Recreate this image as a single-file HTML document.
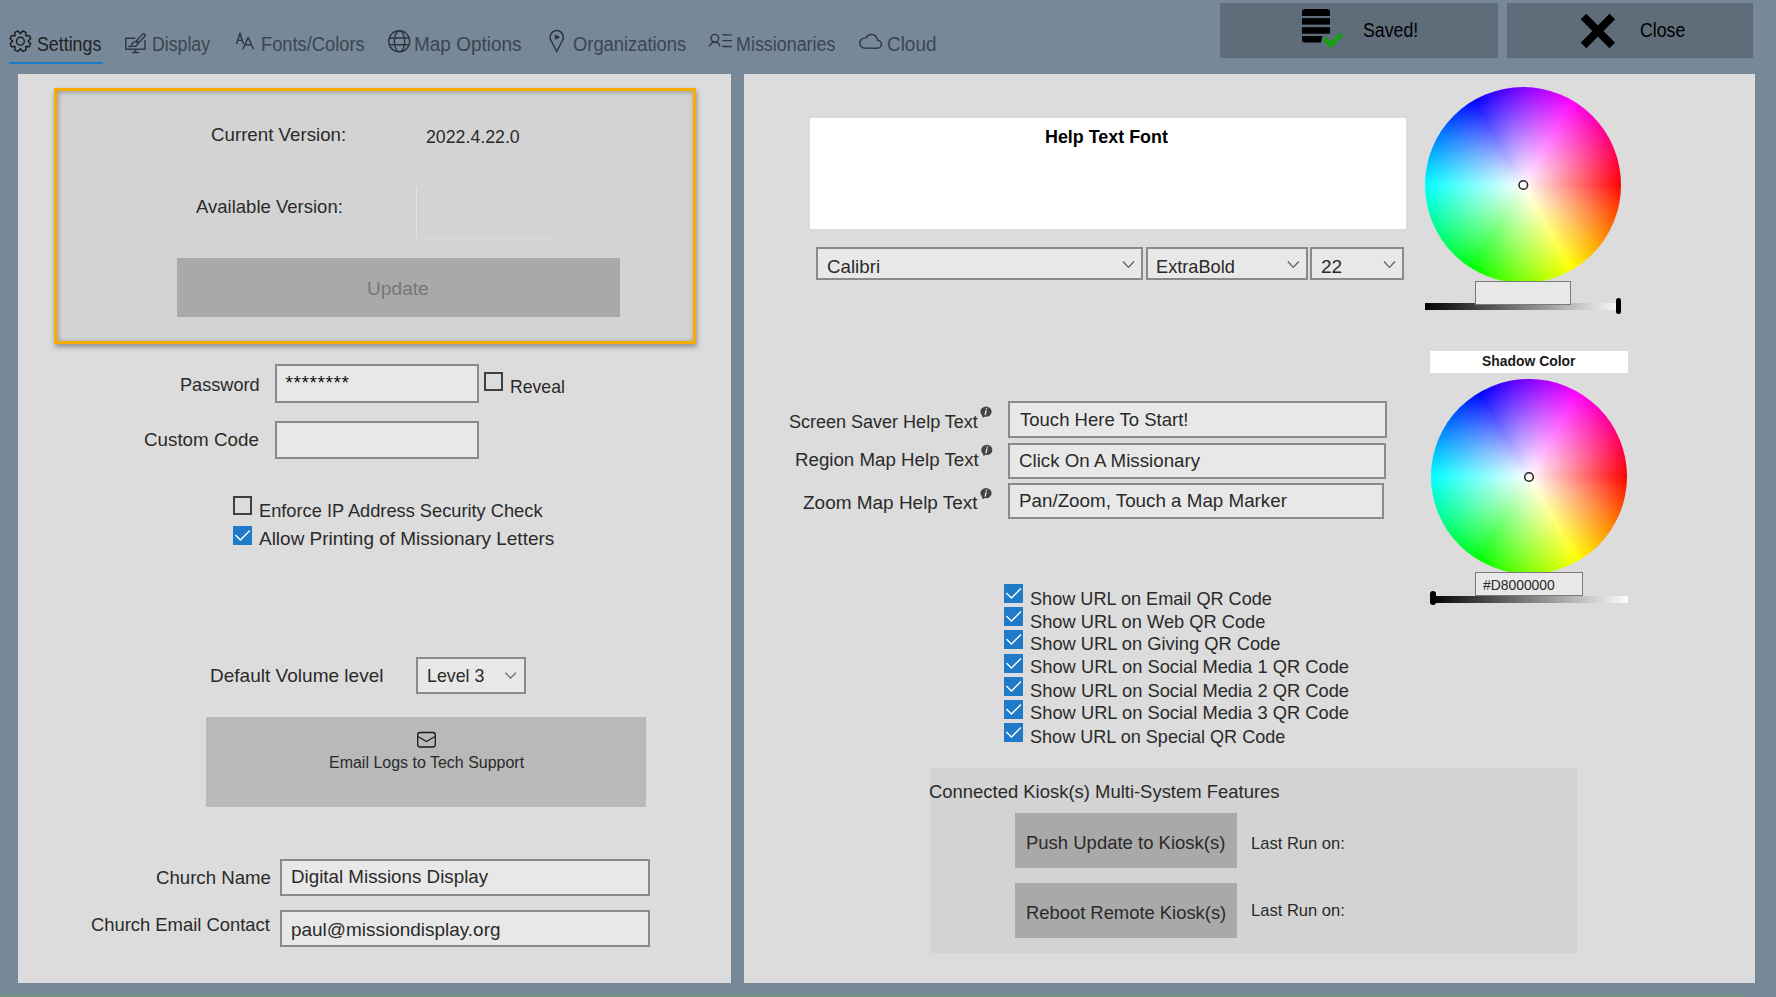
<!DOCTYPE html>
<html><head><meta charset="utf-8"><title>Settings</title>
<style>
html,body{margin:0;padding:0;}
body{width:1776px;height:997px;overflow:hidden;position:relative;background:#778899;font-family:"Liberation Sans",sans-serif;color:#2a2a2a;}
.a{position:absolute;box-sizing:border-box;}
.t{position:absolute;white-space:pre;}
.panel{background:#dcdcdc;}
.tb{background:#e8e8e8;border:2px solid #8a8a8a;}
.btn{background:#a9a9a9;}
.topbtn{background:#5f6d7a;}
.cb{width:19px;height:19px;border:2px solid #404040;}
.cbc{width:19px;height:19px;background:#1f7ac8;}
.wheel{border-radius:50%;background:radial-gradient(circle closest-side,#fff 0%,rgba(255,255,255,0) 100%),conic-gradient(from 90deg,#f00,#ff0,#0f0,#0ff,#00f,#f0f,#f00);}

</style></head><body>
<!-- top buttons -->
<div class="a topbtn" style="left:1220px;top:3px;width:278px;height:55px"></div>
<div class="a topbtn" style="left:1507px;top:3px;width:246px;height:55px"></div>
<svg class="a" style="left:1300px;top:8px" width="44" height="42" viewBox="1300 8 44 42">
 <path d="M1302 11.5a2.5 2.5 0 0 1 2.5-2.5h23a2.5 2.5 0 0 1 2.5 2.5V16H1302z" fill="#000"/>
 <rect x="1302" y="18.1" width="28" height="6.5" fill="#000"/>
 <rect x="1302" y="27.2" width="28" height="6.5" fill="#000"/>
 <path d="M1302 36.1h20.5l-1.5 6.5h-16.5a2.5 2.5 0 0 1-2.5-2.5z" fill="#000"/>
 <path d="M1324.5 38.5l6.5 6.5l10.3-10.8" fill="none" stroke="#5f6d7a" stroke-width="8"/>
 <path d="M1324.5 38.5l6.5 6.5l10.3-10.8" fill="none" stroke="#13a10e" stroke-width="4.6"/>
</svg>
<svg class="a" style="left:1578px;top:11px" width="40" height="40" viewBox="1578 11 40 40">
 <path d="M1583.5 16.5L1612.3 45.5M1612.3 16.5L1583.5 45.5" stroke="#000" stroke-width="8"/>
</svg>
<!-- tab underline -->
<div class="a" style="left:9px;top:62px;width:94px;height:2px;background:#1f7acc"></div>
<!-- panels -->
<div class="a panel" style="left:18px;top:74px;width:713px;height:909px"></div>
<div class="a" style="left:0;top:994px;width:1746px;height:3px;background:#76918a"></div>
<div class="a panel" style="left:744px;top:74px;width:1011px;height:909px"></div>
<!-- orange box -->
<div class="a" style="left:54px;top:88px;width:642px;height:256px;border:3px solid #f8ab00;background:#d3d3d3;box-shadow:1px 3px 5px rgba(0,0,0,0.35), inset 1px 1px 5px rgba(0,0,0,0.3)"></div>
<div class="a" style="left:416px;top:187px;width:140px;height:52px;border-left:1px solid #e2e2e2;border-bottom:1px solid #dadada"></div>
<div class="a btn" style="left:177px;top:258px;width:443px;height:59px"></div>
<!-- password -->
<div class="a tb" style="left:275px;top:364px;width:204px;height:39px"></div>
<div class="a cb" style="left:484px;top:372px"></div>
<div class="a tb" style="left:275px;top:421px;width:204px;height:38px"></div>
<div class="a cb" style="left:233px;top:496px"></div>
<div class="a cbc" style="left:233px;top:526px"></div>
<!-- volume -->
<div class="a tb" style="left:416px;top:657px;width:110px;height:37px"></div>
<div class="a" style="left:206px;top:717px;width:440px;height:90px;background:#b9b9b9"></div>
<div class="a tb" style="left:280px;top:859px;width:370px;height:37px"></div>
<div class="a tb" style="left:280px;top:910px;width:370px;height:37px"></div>
<!-- right panel -->
<div class="a" style="left:810px;top:118px;width:596px;height:111px;background:#fff"></div>
<div class="a tb" style="left:816px;top:247px;width:327px;height:33px"></div>
<div class="a tb" style="left:1146px;top:247px;width:162px;height:33px"></div>
<div class="a tb" style="left:1310px;top:247px;width:94px;height:33px"></div>
<div class="a wheel" style="left:1425px;top:87px;width:196px;height:196px"></div>
<div class="a" style="left:1425px;top:303px;width:196px;height:7px;background:linear-gradient(90deg,#000,rgba(255,255,255,0.9))"></div>
<div class="a" style="left:1475px;top:281px;width:96px;height:24px;background:#e8e8e8;border:1px solid #7a7a7a"></div>
<div class="a" style="left:1616px;top:298px;width:5px;height:16px;background:#000;border-radius:3px"></div>
<div class="a" style="left:1430px;top:351px;width:198px;height:22px;background:#fff"></div>
<div class="a wheel" style="left:1431px;top:379px;width:196px;height:195px"></div>
<div class="a" style="left:1430px;top:596px;width:198px;height:7px;background:linear-gradient(90deg,#000,rgba(255,255,255,0.9))"></div>
<div class="a" style="left:1475px;top:572px;width:108px;height:24px;background:#e8e8e8;border:1px solid #7a7a7a"></div>
<div class="a" style="left:1430px;top:591px;width:5.5px;height:14px;background:#000;border-radius:3px"></div>
<div class="a tb" style="left:1008px;top:401px;width:379px;height:37px"></div>
<div class="a tb" style="left:1008px;top:443px;width:378px;height:36px"></div>
<div class="a tb" style="left:1008px;top:483px;width:376px;height:36px"></div>
<div class="a cbc" style="left:1004px;top:584px"></div>
<div class="a cbc" style="left:1004px;top:607px"></div>
<div class="a cbc" style="left:1004px;top:630px"></div>
<div class="a cbc" style="left:1004px;top:654px"></div>
<div class="a cbc" style="left:1004px;top:677px"></div>
<div class="a cbc" style="left:1004px;top:700px"></div>
<div class="a cbc" style="left:1004px;top:723px"></div>
<div class="a" style="left:930px;top:768px;width:647px;height:185px;background:#d3d3d3"></div>
<div class="a btn" style="left:1015px;top:813px;width:222px;height:55px"></div>
<div class="a btn" style="left:1015px;top:883px;width:222px;height:55px"></div>
<svg class="a" style="left:0;top:0" width="1776" height="997" viewBox="0 0 1776 997">
 <g fill="none" stroke-linejoin="round">
  <path d="M20.40 33.60 L22.76 30.97 L25.96 32.30 L25.77 35.83 L29.30 35.64 L30.63 38.84 L28.00 41.20 L30.63 43.56 L29.30 46.76 L25.77 46.57 L25.96 50.10 L22.76 51.43 L20.40 48.80 L18.04 51.43 L14.84 50.10 L15.03 46.57 L11.50 46.76 L10.17 43.56 L12.80 41.20 L10.17 38.84 L11.50 35.64 L15.03 35.83 L14.84 32.30 L18.04 30.97Z" stroke="#1a1a1a" stroke-width="1.4"/>
  <circle cx="20.4" cy="41.2" r="3.9" stroke="#1a1a1a" stroke-width="1.4"/>
  <g stroke="#2e3640" stroke-width="1.4">
   <path d="M135.3 38.3H125.8V49.3H145V40"/>
   <path d="M135.5 49.6V52.2M132 52.5H139"/>
   <path d="M135.94 41.34L142.74 34.14A1.5 1.5 0 0 1 144.86 36.26L138.06 43.46Z"/>
   <path d="M135.94 41.34Q131.8 42.2 131.7 45V46.4H135.6L138.06 43.46M136.6 40.6L138.7 42.7"/>
   <path d="M128 46.4H131.7"/>
   <path d="M236.6 43.8L240 33.2L243.4 43.8M237.6 40.4H242.4"/>
   <path d="M242.8 49.2L248.2 37.4L253.6 49.2M244.6 44.7H251.9"/>
   <circle cx="399.2" cy="41.3" r="10.5"/>
   <ellipse cx="399.5" cy="41.3" rx="5.2" ry="10.5"/>
   <path d="M389.5 38H409M389.5 44.8H409"/>
   <path d="M556.7 51.6L550.9 40.3A6.6 6.6 0 1 1 562.5 40.3Z"/>
   <path d="M555.4 35.4L559 37.1L555.4 38.8Z" fill="#2e3640"/>
   <circle cx="714.9" cy="38.2" r="3.8"/>
   <path d="M709.6 46.5Q710.8 42.2 714.9 42.1Q719 42.2 720 46.5"/>
   <path d="M722.3 34.9H731.9M722.3 40.6H731.9M722.3 46.5H731.9"/>
   <path d="M864.6 48.1A5 5 0 0 1 864.9 38.1L866.3 37.6A5.9 5.9 0 0 1 877.4 40.3A4 4 0 0 1 877.4 48.3Z"/>
  </g>
  <g stroke="#fff" stroke-width="1.4" stroke-linejoin="miter">
   <path d="M235.4 535.1L240.4 540L249.9 530.5"/>
   <path d="M1006.4 593.1L1011.4 598.0L1020.9 588.5"/>
   <path d="M1006.4 616.1L1011.4 621.0L1020.9 611.5"/>
   <path d="M1006.4 639.1L1011.4 644.0L1020.9 634.5"/>
   <path d="M1006.4 663.1L1011.4 668.0L1020.9 658.5"/>
   <path d="M1006.4 686.1L1011.4 691.0L1020.9 681.5"/>
   <path d="M1006.4 709.1L1011.4 714.0L1020.9 704.5"/>
   <path d="M1006.4 732.1L1011.4 737.0L1020.9 727.5"/>
  </g>
  <g stroke="#555" stroke-width="1.1">
   <path d="M1123 261.5L1128.5 267.3L1134 261.5"/>
   <path d="M1287.8 261.5L1293.3 267.3L1298.8 261.5"/>
   <path d="M1384 261.5L1389.5 267.3L1395 261.5"/>
   <path d="M505.4 672.6L510.7 678.2L516 672.6"/>
  </g>
  <g stroke="#1a1a1a" stroke-width="1.3">
   <rect x="417.7" y="732.5" width="17.6" height="14.5" rx="2.5"/>
   <path d="M417.9 736.5L426.5 741.5L435.1 736.5"/>
  </g>
  <circle cx="1523.3" cy="185" r="4.3" stroke="#222" stroke-width="1.5"/>
  <circle cx="1529" cy="477" r="4.3" stroke="#222" stroke-width="1.5"/>
 </g>
 <g><ellipse cx="986" cy="411.6" rx="5.6" ry="5.2" fill="#444"/><path d="M981.6 414.2L982.8 417.8L985.2 416.2Z" fill="#444"/><path d="M986.5 408.6L986.4 408.9M986.1 410.6L985.2 414.6" stroke="#eee" stroke-width="1.3" stroke-linecap="round"/></g>
 <g><ellipse cx="986.8" cy="449.9" rx="5.6" ry="5.2" fill="#444"/><path d="M982.4 452.5L983.6 456.1L986.0 454.5Z" fill="#444"/><path d="M987.3 446.9L987.2 447.2M986.9 448.9L986.0 452.9" stroke="#eee" stroke-width="1.3" stroke-linecap="round"/></g>
 <g><ellipse cx="986" cy="493.1" rx="5.6" ry="5.2" fill="#444"/><path d="M981.6 495.7L982.8 499.3L985.2 497.7Z" fill="#444"/><path d="M986.5 490.1L986.4 490.4M986.1 492.1L985.2 496.1" stroke="#eee" stroke-width="1.3" stroke-linecap="round"/></g>
</svg>
<div class="t" style="left:285.5px;top:371px;font-size:19px;line-height:24px;letter-spacing:0.62px;color:#111">********</div>

<div class="t" style="left:36.9px;top:32.0px;font-size:20px;line-height:25px;letter-spacing:0.000px;transform:scaleX(0.8901);transform-origin:0 0;color:#222222;">Settings</div>
<div class="t" style="left:152.2px;top:32.0px;font-size:20px;line-height:25px;letter-spacing:0.000px;transform:scaleX(0.8844);transform-origin:0 0;color:#3b4550;">Display</div>
<div class="t" style="left:261.2px;top:31.8px;font-size:20px;line-height:25px;letter-spacing:0.000px;transform:scaleX(0.9144);transform-origin:0 0;color:#3b4550;">Fonts/Colors</div>
<div class="t" style="left:414.3px;top:32.0px;font-size:20px;line-height:25px;letter-spacing:0.000px;transform:scaleX(0.9486);transform-origin:0 0;color:#3b4550;">Map Options</div>
<div class="t" style="left:572.6px;top:32.0px;font-size:20px;line-height:25px;letter-spacing:0.000px;transform:scaleX(0.9172);transform-origin:0 0;color:#3b4550;">Organizations</div>
<div class="t" style="left:736.2px;top:32.0px;font-size:20px;line-height:25px;letter-spacing:0.000px;transform:scaleX(0.8945);transform-origin:0 0;color:#3b4550;">Missionaries</div>
<div class="t" style="left:886.5px;top:32.0px;font-size:20px;line-height:25px;letter-spacing:0.000px;transform:scaleX(0.9460);transform-origin:0 0;color:#3b4550;">Cloud</div>
<div class="t" style="left:1362.8px;top:17.9px;font-size:19.5px;line-height:24px;letter-spacing:0.000px;transform:scaleX(0.9103);transform-origin:0 0;color:#000;">Saved!</div>
<div class="t" style="left:1639.7px;top:17.6px;font-size:19.5px;line-height:24px;letter-spacing:0.000px;transform:scaleX(0.9083);transform-origin:0 0;color:#000;">Close</div>
<div class="t" style="left:210.5px;top:122.9px;font-size:19px;line-height:24px;letter-spacing:0.000px;transform:scaleX(0.9844);transform-origin:0 0;">Current Version:</div>
<div class="t" style="left:425.7px;top:124.7px;font-size:19px;line-height:24px;letter-spacing:0.000px;transform:scaleX(0.9333);transform-origin:0 0;">2022.4.22.0</div>
<div class="t" style="left:195.8px;top:195.2px;font-size:19px;line-height:24px;letter-spacing:0.000px;transform:scaleX(0.9745);transform-origin:0 0;">Available Version:</div>
<div class="t" style="left:366.9px;top:277.0px;font-size:19px;line-height:24px;letter-spacing:0.000px;transform:scaleX(1.0083);transform-origin:0 0;color:#777777;">Update</div>
<div class="t" style="left:179.7px;top:372.8px;font-size:19px;line-height:24px;letter-spacing:0.000px;transform:scaleX(0.9556);transform-origin:0 0;">Password</div>
<div class="t" style="left:509.7px;top:375.0px;font-size:19px;line-height:24px;letter-spacing:0.000px;transform:scaleX(0.9281);transform-origin:0 0;">Reveal</div>
<div class="t" style="left:143.6px;top:428.2px;font-size:19px;line-height:24px;letter-spacing:0.000px;transform:scaleX(0.9886);transform-origin:0 0;">Custom Code</div>
<div class="t" style="left:259.0px;top:498.5px;font-size:19px;line-height:24px;letter-spacing:0.000px;transform:scaleX(0.9599);transform-origin:0 0;">Enforce IP Address Security Check</div>
<div class="t" style="left:259.4px;top:527.0px;font-size:19px;line-height:24px;letter-spacing:0.000px;transform:scaleX(0.9986);transform-origin:0 0;">Allow Printing of Missionary Letters</div>
<div class="t" style="left:209.6px;top:664.3px;font-size:19px;line-height:24px;letter-spacing:-0.000px;transform:scaleX(1.0018);transform-origin:0 0;">Default Volume level</div>
<div class="t" style="left:426.7px;top:664.3px;font-size:19px;line-height:24px;letter-spacing:0.000px;transform:scaleX(0.9350);transform-origin:0 0;">Level 3</div>
<div class="t" style="left:328.7px;top:752.5px;font-size:16px;line-height:20px;letter-spacing:0.000px;transform:scaleX(0.9985);transform-origin:0 0;">Email Logs to Tech Support</div>
<div class="t" style="left:155.7px;top:866.3px;font-size:19px;line-height:24px;letter-spacing:0.000px;transform:scaleX(0.9802);transform-origin:0 0;">Church Name</div>
<div class="t" style="left:290.6px;top:865.3px;font-size:19px;line-height:24px;letter-spacing:0.000px;transform:scaleX(0.9879);transform-origin:0 0;">Digital Missions Display</div>
<div class="t" style="left:91.4px;top:913.0px;font-size:19px;line-height:24px;letter-spacing:0.000px;transform:scaleX(0.9674);transform-origin:0 0;">Church Email Contact</div>
<div class="t" style="left:290.6px;top:917.6px;font-size:19px;line-height:24px;letter-spacing:0.000px;transform:scaleX(0.9971);transform-origin:0 0;">paul@missiondisplay.org</div>
<div class="t" style="left:1045.0px;top:125.8px;font-size:18px;line-height:22px;letter-spacing:0.000px;transform:scaleX(0.9935);transform-origin:0 0;font-weight:700;color:#000;">Help Text Font</div>
<div class="t" style="left:826.5px;top:255.0px;font-size:19px;line-height:24px;letter-spacing:0.000px;transform:scaleX(0.9865);transform-origin:0 0;">Calibri</div>
<div class="t" style="left:1156.3px;top:255.0px;font-size:19px;line-height:24px;letter-spacing:0.000px;transform:scaleX(0.9575);transform-origin:0 0;">ExtraBold</div>
<div class="t" style="left:1320.5px;top:255.0px;font-size:19px;line-height:24px;letter-spacing:0.000px;transform:scaleX(1.0053);transform-origin:0 0;">22</div>
<div class="t" style="left:1482.0px;top:352.3px;font-size:14.5px;line-height:18px;letter-spacing:0.000px;transform:scaleX(0.9583);transform-origin:0 0;font-weight:700;color:#1a1a1a;">Shadow Color</div>
<div class="t" style="left:1482.9px;top:575.8px;font-size:14.5px;line-height:18px;letter-spacing:0.000px;transform:scaleX(0.9573);transform-origin:0 0;">#D8000000</div>
<div class="t" style="left:788.5px;top:411.0px;font-size:18px;line-height:22px;letter-spacing:0.000px;transform:scaleX(1.0005);transform-origin:0 0;">Screen Saver Help Text</div>
<div class="t" style="left:795.1px;top:449.0px;font-size:18px;line-height:22px;letter-spacing:0.000px;transform:scaleX(1.0392);transform-origin:0 0;">Region Map Help Text</div>
<div class="t" style="left:802.7px;top:491.5px;font-size:18px;line-height:22px;letter-spacing:0.000px;transform:scaleX(1.0536);transform-origin:0 0;">Zoom Map Help Text</div>
<div class="t" style="left:1019.8px;top:407.9px;font-size:19px;line-height:24px;letter-spacing:0.000px;transform:scaleX(0.9749);transform-origin:0 0;">Touch Here To Start!</div>
<div class="t" style="left:1018.6px;top:449.0px;font-size:19px;line-height:24px;letter-spacing:0.000px;transform:scaleX(0.9858);transform-origin:0 0;">Click On A Missionary</div>
<div class="t" style="left:1018.8px;top:489.0px;font-size:19px;line-height:24px;letter-spacing:0.000px;transform:scaleX(0.9885);transform-origin:0 0;">Pan/Zoom, Touch a Map Marker</div>
<div class="t" style="left:1030.0px;top:586.7px;font-size:19px;line-height:24px;letter-spacing:0.000px;transform:scaleX(0.9532);transform-origin:0 0;">Show URL on Email QR Code</div>
<div class="t" style="left:1030.0px;top:609.7px;font-size:19px;line-height:24px;letter-spacing:0.000px;transform:scaleX(0.9605);transform-origin:0 0;">Show URL on Web QR Code</div>
<div class="t" style="left:1030.0px;top:632.4px;font-size:19px;line-height:24px;letter-spacing:0.000px;transform:scaleX(0.9628);transform-origin:0 0;">Show URL on Giving QR Code</div>
<div class="t" style="left:1030.0px;top:655.4px;font-size:19px;line-height:24px;letter-spacing:0.000px;transform:scaleX(0.9641);transform-origin:0 0;">Show URL on Social Media 1 QR Code</div>
<div class="t" style="left:1030.0px;top:678.8px;font-size:19px;line-height:24px;letter-spacing:0.000px;transform:scaleX(0.9641);transform-origin:0 0;">Show URL on Social Media 2 QR Code</div>
<div class="t" style="left:1030.0px;top:701.4px;font-size:19px;line-height:24px;letter-spacing:0.000px;transform:scaleX(0.9641);transform-origin:0 0;">Show URL on Social Media 3 QR Code</div>
<div class="t" style="left:1030.0px;top:725.3px;font-size:19px;line-height:24px;letter-spacing:0.000px;transform:scaleX(0.9506);transform-origin:0 0;">Show URL on Special QR Code</div>
<div class="t" style="left:928.9px;top:780.4px;font-size:19px;line-height:24px;letter-spacing:0.000px;transform:scaleX(0.9706);transform-origin:0 0;">Connected Kiosk(s) Multi-System Features</div>
<div class="t" style="left:1026.3px;top:830.7px;font-size:19px;line-height:24px;letter-spacing:0.000px;transform:scaleX(0.9729);transform-origin:0 0;">Push Update to Kiosk(s)</div>
<div class="t" style="left:1250.5px;top:832.7px;font-size:17px;line-height:21px;letter-spacing:0.000px;transform:scaleX(0.9734);transform-origin:0 0;">Last Run on:</div>
<div class="t" style="left:1025.5px;top:900.6px;font-size:19px;line-height:24px;letter-spacing:0.000px;transform:scaleX(0.9673);transform-origin:0 0;">Reboot Remote Kiosk(s)</div>
<div class="t" style="left:1250.5px;top:900.1px;font-size:17px;line-height:21px;letter-spacing:0.000px;transform:scaleX(0.9734);transform-origin:0 0;">Last Run on:</div>
</body></html>
